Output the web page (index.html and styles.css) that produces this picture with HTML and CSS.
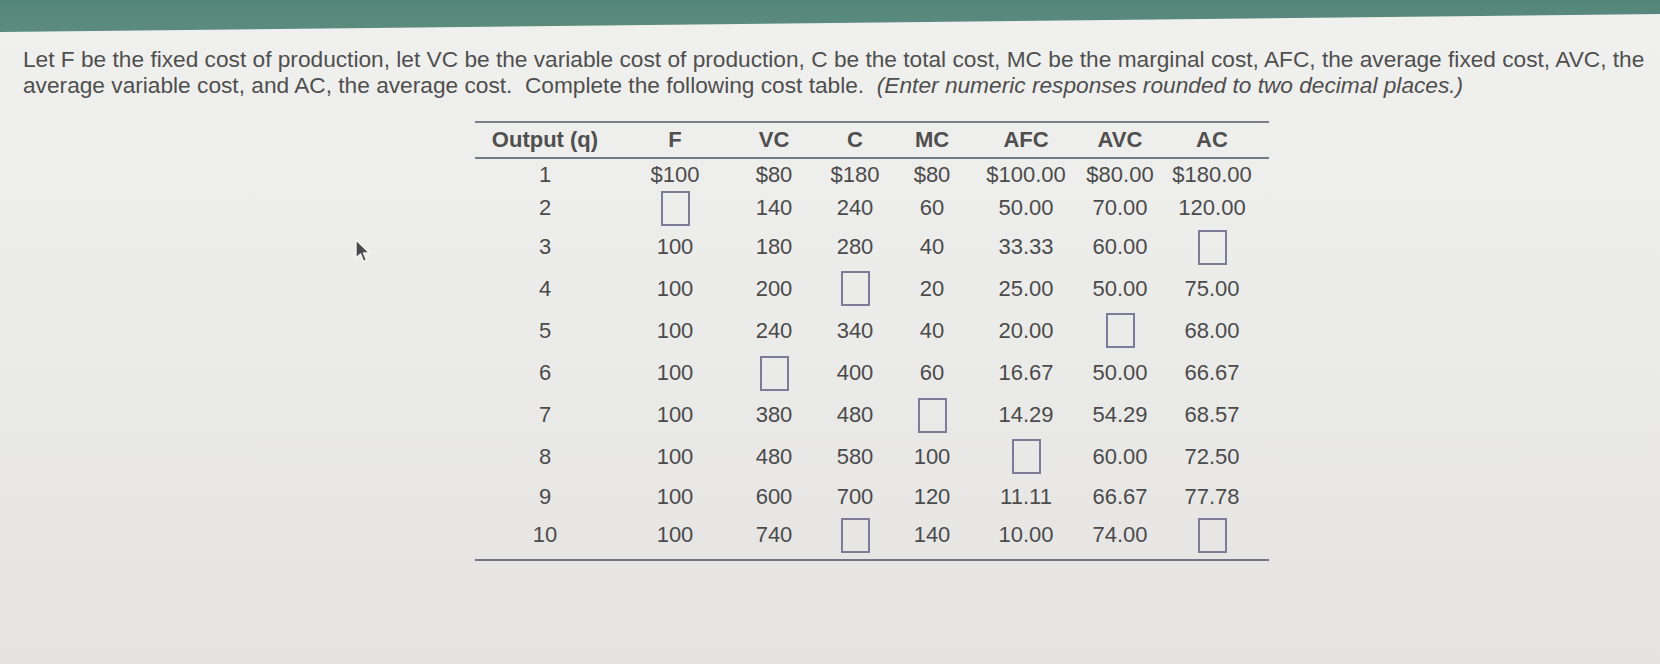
FILE: index.html
```html
<!DOCTYPE html>
<html lang="en">
<head>
<meta charset="utf-8">
<title>Cost table</title>
<link rel="stylesheet" href="styles.css">
</head>
<body>
<div class="page">
  <div class="topbar"></div>
  <div class="content">
    <p class="question"><span>Let F be the fixed cost of production, let VC be the variable cost of production, C be the total cost, MC be the marginal cost, AFC, the average fixed cost, AVC, the</span> <span>average variable cost, and AC, the average cost.&nbsp; Complete the following cost table.</span>&nbsp; <em>(Enter numeric responses rounded to two decimal places.)</em></p>
    <div class="cost-table">
      <div class="row head"><div>Output (q)</div><div>F</div><div>VC</div><div>C</div><div>MC</div><div>AFC</div><div>AVC</div><div>AC</div></div>
      <div class="row"><div>1</div><div>$100</div><div>$80</div><div>$180</div><div>$80</div><div>$100.00</div><div>$80.00</div><div>$180.00</div></div>
      <div class="row"><div>2</div><div><span class="box"></span></div><div>140</div><div>240</div><div>60</div><div>50.00</div><div>70.00</div><div>120.00</div></div>
      <div class="row"><div>3</div><div>100</div><div>180</div><div>280</div><div>40</div><div>33.33</div><div>60.00</div><div><span class="box"></span></div></div>
      <div class="row"><div>4</div><div>100</div><div>200</div><div><span class="box"></span></div><div>20</div><div>25.00</div><div>50.00</div><div>75.00</div></div>
      <div class="row"><div>5</div><div>100</div><div>240</div><div>340</div><div>40</div><div>20.00</div><div><span class="box"></span></div><div>68.00</div></div>
      <div class="row"><div>6</div><div>100</div><div><span class="box"></span></div><div>400</div><div>60</div><div>16.67</div><div>50.00</div><div>66.67</div></div>
      <div class="row"><div>7</div><div>100</div><div>380</div><div>480</div><div><span class="box"></span></div><div>14.29</div><div>54.29</div><div>68.57</div></div>
      <div class="row"><div>8</div><div>100</div><div>480</div><div>580</div><div>100</div><div><span class="box"></span></div><div>60.00</div><div>72.50</div></div>
      <div class="row"><div>9</div><div>100</div><div>600</div><div>700</div><div>120</div><div>11.11</div><div>66.67</div><div>77.78</div></div>
      <div class="row"><div>10</div><div>100</div><div>740</div><div><span class="box"></span></div><div>140</div><div>10.00</div><div>74.00</div><div><span class="box"></span></div></div>
    </div>
  </div>
  <svg class="cursor" width="18" height="26" viewBox="0 0 18 26" aria-hidden="true">
    <path d="M2 1 L2 19 L6.5 15 L9.5 22.5 L12.5 21.2 L9.5 14 L15.5 14 Z" fill="#4a4a4c" stroke="#f4f4f4" stroke-width="1.4" stroke-linejoin="round"/>
  </svg>
</div>
</body>
</html>
```
FILE: styles.css
```css
html, body {
  margin: 0;
  height: 100%;
  overflow: hidden;
}

body {
  background: #e9e9e7;
  font-family: "Liberation Sans", Arial, sans-serif;
}

.page {
  position: relative;
  width: 1660px;
  height: 664px;
  overflow: hidden;
  background: linear-gradient(180deg, #f0f0ee 0%, #ebebe9 50%, #e4e3e1 100%);
}

.topbar {
  height: 33px;
  margin-bottom: -10px;
  background: linear-gradient(180deg, #55867a 0%, #5b8c7e 100%);
  clip-path: polygon(0 0, 100% 0, 100% 14px, 0 32px);
}

.content {
  padding: 23px 0 0 23px;
}

.question {
  margin: 0;
  width: 1637px;
  font-size: 22.7px;
  line-height: 26px;
  color: #4f4f4f;
}

.question em {
  font-style: italic;
}

.cost-table {
  margin: 23px 0 0 452px;
  width: 794px;
  border-top: 2px solid #7a808c;
  border-bottom: 2px solid #6f7684;
  padding-bottom: 6px;
  font-size: 22px;
  color: #4b4b4b;
}

.row {
  display: grid;
  grid-template-columns: 140px 120px 78px 84px 70px 118px 70px 114px;
  align-items: center;
  justify-items: center;
  white-space: nowrap;
}

.head {
  height: 34px;
  font-weight: bold;
  color: #4f4f4f;
  border-bottom: 2px solid #737a88;
}

.row:nth-child(2) { height: 31px; }
.row:nth-child(3) { height: 36px; }
.row:nth-child(4) { height: 42px; }
.row:nth-child(5) { height: 41px; }
.row:nth-child(6) { height: 43px; }
.row:nth-child(7) { height: 42px; }
.row:nth-child(8) { height: 42px; }
.row:nth-child(9) { height: 41px; }
.row:nth-child(10) { height: 40px; }
.row:nth-child(11) { height: 36px; }

.box {
  display: block;
  width: 25px;
  height: 31px;
  border: 2px solid #7c7b98;
}

.cursor {
  position: absolute;
  left: 354px;
  top: 239px;
}
```
